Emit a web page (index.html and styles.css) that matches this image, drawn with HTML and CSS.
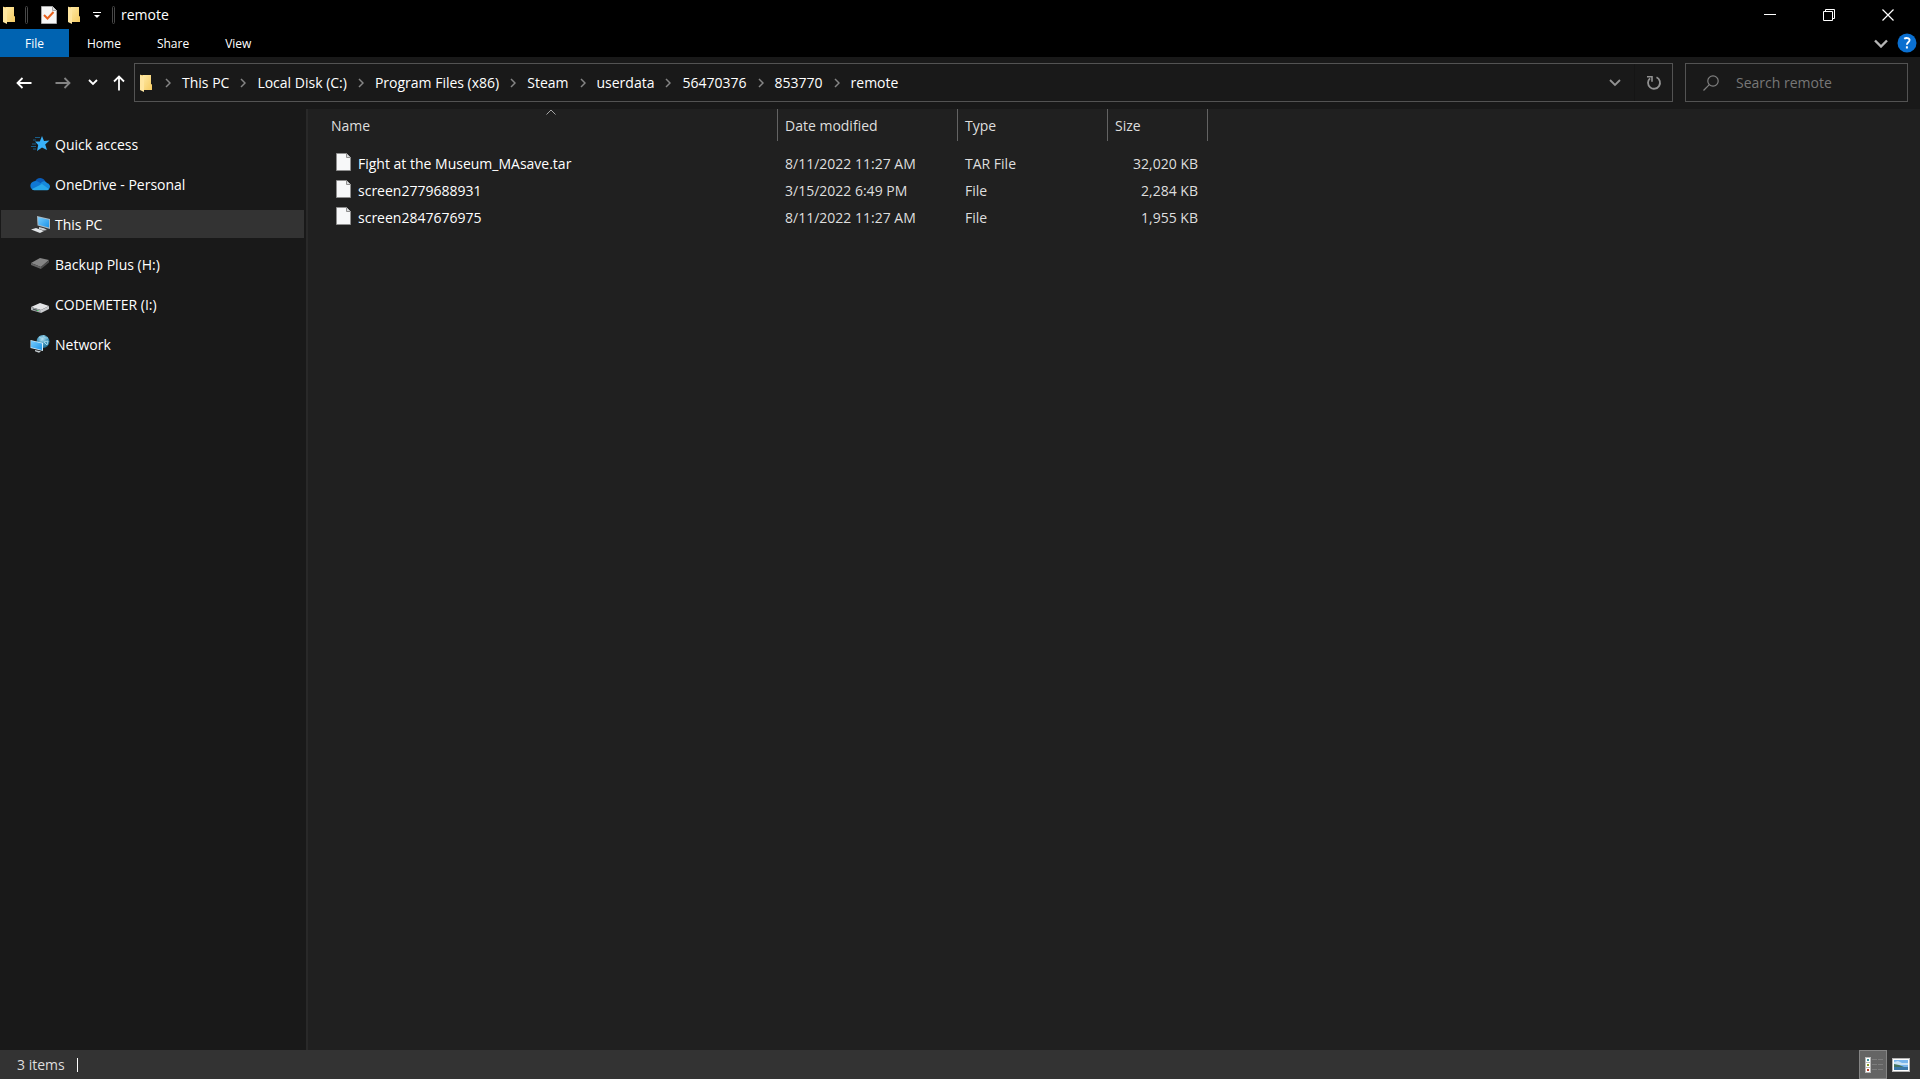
FILE: index.html
```html
<!DOCTYPE html>
<html lang="en">
<head>
  <meta charset="UTF-8">
  <meta name="viewport" content="width=device-width, initial-scale=1.0">
  <title>remote</title>
  <link rel="stylesheet" href="styles.css">
</head>
<body>
<svg class="defs" width="0" height="0" aria-hidden="true">
  <defs>
    <linearGradient id="folder-fill" x1="0" y1="0" x2="1" y2="1">
      <stop offset="0" stop-color="#ffe9a3"/>
      <stop offset="1" stop-color="#f5cb62"/>
    </linearGradient>
    <linearGradient id="screen-fill" x1="0" y1="0" x2="1" y2="1">
      <stop offset="0" stop-color="#79cdfd"/>
      <stop offset="1" stop-color="#1b93e8"/>
    </linearGradient>
    <radialGradient id="globe-fill" cx="0.45" cy="0.3" r="0.7">
      <stop offset="0" stop-color="#b9e2f2"/>
      <stop offset="0.5" stop-color="#4d9fc4"/>
      <stop offset="1" stop-color="#1f6d93"/>
    </radialGradient>
    <symbol id="folder" viewBox="0 0 14 18">
      <path d="M2 1h10v9l1 1v5H5z" fill="#efc661"/>
      <path d="M4 1h8v9l1 1v5H4z" fill="url(#folder-fill)"/>
      <path d="M1 0.5L5 3v15L1 16z" fill="#ffe6a0"/>
    </symbol>
    <symbol id="chevron" viewBox="0 0 6 10">
      <path d="M1 1l4 4-4 4" fill="none" stroke="#858585" stroke-width="1.5"/>
    </symbol>
    <symbol id="page" viewBox="0 0 15 18">
      <path d="M0.5 0.5h10l4 4v13h-14z" fill="#f7f8f9" stroke="#8f8f8f"/>
      <path d="M10.5 0.5v4h4" fill="#d8dadc" stroke="#8f8f8f"/>
    </symbol>
  </defs>
</svg>
<div class="window">
  <header class="title-bar">
    <svg class="folder-icon" width="14" height="18"><use href="#folder"/></svg>
    <span class="divider"></span>
    <div class="quick-tools">
      <button aria-label="Properties">
        <svg width="16" height="18" viewBox="0 0 16 18"><path d="M0.5 0.5h11l4 4v13h-15z" fill="#f6f6f6" stroke="#a8a8a8"/><path d="M11.5 0.5v4h4" fill="#ddd" stroke="#a8a8a8"/><path d="M3 9l3.500 3.500L12.500 6" fill="none" stroke="#e8601c" stroke-width="2"/></svg>
      </button>
      <button aria-label="New folder"><svg width="14" height="18"><use href="#folder"/></svg></button>
      <button aria-label="Customize toolbar">
        <svg width="10" height="8" viewBox="0 0 10 8"><path d="M2 1.500h8" stroke="#fff"/><path d="M3 4h6L6 7z" fill="#fff"/></svg>
      </button>
    </div>
    <span class="divider"></span>
    <h1>remote</h1>
    <div class="window-buttons">
      <button aria-label="Minimize"><svg width="12" height="12" viewBox="0 0 12 12"><path d="M0 5.500h12" stroke="#fff"/></svg></button>
      <button aria-label="Restore"><svg width="12" height="12" viewBox="0 0 12 12"><path d="M0.500 2.500h9v9h-9zM2.500 2.500v-2h9v9h-2" fill="none" stroke="#fff"/></svg></button>
      <button aria-label="Close"><svg width="12" height="12" viewBox="0 0 12 12"><path d="M0.500 0.500l11 11M11.500 0.500l-11 11" stroke="#fff" stroke-width="1.200"/></svg></button>
    </div>
  </header>

  <nav class="ribbon">
    <button class="tab file-tab">File</button>
    <button class="tab">Home</button>
    <button class="tab">Share</button>
    <button class="tab">View</button>
    <div class="ribbon-right">
      <button aria-label="Expand the ribbon"><svg width="14" height="9" viewBox="0 0 14 9"><path d="M1 1.500l6 6 6-6" fill="none" stroke="#b5b5b5" stroke-width="2.400"/></svg></button>
      <button class="help" aria-label="Help"><svg width="20" height="20" viewBox="0 0 20 20"><circle cx="10" cy="10" r="9.500" fill="#0a6fd0"/><path d="M7.200 5.800c1.600-1.200 5.400-1.200 5.400 1.300 0 2.200-2.700 2.200-2.700 4.700" fill="none" stroke="#fff" stroke-width="1.800"/><path d="M8.900 13.300h2v2.200h-2z" fill="#fff"/></svg></button>
    </div>
  </nav>

  <div class="address-row">
    <div class="history">
      <button aria-label="Back"><svg width="16" height="12" viewBox="0 0 16 12"><path d="M15.500 6H1.500M6.500 1l-5 5 5 5" fill="none" stroke="#fff" stroke-width="1.800"/></svg></button>
      <button aria-label="Forward"><svg width="16" height="12" viewBox="0 0 16 12"><path d="M0.500 6h14M9.500 1l5 5-5 5" fill="none" stroke="#848484" stroke-width="1.800"/></svg></button>
      <button class="narrow" aria-label="Recent locations"><svg width="10" height="7" viewBox="0 0 10 7"><path d="M1 1l4 4 4-4" fill="none" stroke="#fff" stroke-width="1.800"/></svg></button>
      <button class="up" aria-label="Up"><svg width="12" height="16" viewBox="0 0 12 16"><path d="M6 15.500V1.500M1 6.500l5-5 5 5" fill="none" stroke="#fff" stroke-width="1.800"/></svg></button>
    </div>
    <div class="address-box">
      <svg class="folder-icon" width="14" height="18"><use href="#folder"/></svg>
      <ol class="crumbs">
        <li><svg width="6" height="10"><use href="#chevron"/></svg><a href="#">This PC</a></li>
        <li><svg width="6" height="10"><use href="#chevron"/></svg><a href="#">Local Disk (C:)</a></li>
        <li><svg width="6" height="10"><use href="#chevron"/></svg><a href="#">Program Files (x86)</a></li>
        <li><svg width="6" height="10"><use href="#chevron"/></svg><a href="#">Steam</a></li>
        <li><svg width="6" height="10"><use href="#chevron"/></svg><a href="#">userdata</a></li>
        <li><svg width="6" height="10"><use href="#chevron"/></svg><a href="#">56470376</a></li>
        <li><svg width="6" height="10"><use href="#chevron"/></svg><a href="#">853770</a></li>
        <li><svg width="6" height="10"><use href="#chevron"/></svg><a href="#">remote</a></li>
      </ol>
      <button aria-label="Previous locations"><svg width="12" height="8" viewBox="0 0 12 8"><path d="M1 1l5 5 5-5" fill="none" stroke="#929292" stroke-width="1.800"/></svg></button>
      <button class="refresh" aria-label="Refresh"><svg width="16" height="16" viewBox="0 0 16 16"><path d="M10.500 2.300A6 6 0 1 1 4 3.300" fill="none" stroke="#929292" stroke-width="1.800"/><path d="M1 1.800h5v5" fill="none" stroke="#929292" stroke-width="1.600"/></svg></button>
    </div>
    <label class="search-box">
      <svg width="16" height="16" viewBox="0 0 16 16"><circle cx="10" cy="6" r="5.200" fill="none" stroke="#808080" stroke-width="1.200"/><path d="M6.300 9.700L0.500 15.500" stroke="#808080" stroke-width="1.200"/></svg>
      <input type="search" placeholder="Search remote" aria-label="Search remote">
    </label>
  </div>

  <main class="panes">
    <nav class="sidebar">
      <a href="#">
        <svg width="20" height="20" viewBox="0 0 20 20"><path d="M12 2l2 5 5.500-0.500-4.300 4L17 16l-5-2.500L7 17l1.200-6L5 7.500h4.800z" fill="#38b0f8"/><path d="M5 3.500h5M3 6h3M2 10h4M1 12.500h5M3 15h3" stroke="#1b6fa5" stroke-width="0.800"/></svg>
        Quick access
      </a>
      <a href="#">
        <svg width="20" height="20" viewBox="0 0 20 20"><path d="M5 8c1-4 7-6 10-1l1 4-9 2z" fill="#0a5cb8"/><path d="M4 16c-5-1-5-8 1-9 3 0 4 1 8 4l-6 5z" fill="#0f78d4"/><path d="M10 10c2-3 5-4 7-1 4 1 4 6 0 7l-5-2z" fill="#1689dc"/><path d="M2 15l10-5 7 5c-0.500 1-1 1.200-3 1.200H4c-1 0-1.500-0.400-2-1.200z" fill="#28a8ea"/></svg>
        OneDrive - Personal
      </a>
      <a href="#" class="selected">
        <svg width="20" height="20" viewBox="0 0 20 20"><path d="M7 2l13 3v10L7.500 11.500z" fill="#a9bac5"/><path d="M8 3.200l11 2.600v7.800L8.500 10.800z" fill="url(#screen-fill)"/><path d="M9 13l5 1.200 3 1.800-3 0.500-5-1.500z" fill="#cbd0d4"/><path d="M1 15.500l5-1.500 8 3-4 2z" fill="#e1e4e7"/></svg>
        This PC
      </a>
      <a href="#">
        <svg width="20" height="20" viewBox="0 0 20 20"><path d="M1 9l9-5 9 2-8 7z" fill="#858585"/><path d="M1 9l10 4v2L1 11z" fill="#636363"/><path d="M19 6v2.500L11 15v-2z" fill="#4f4f4f"/></svg>
        Backup Plus (H:)
      </a>
      <a href="#">
        <svg width="20" height="20" viewBox="0 0 20 20"><g transform="translate(0 2)"><path d="M1 11l9-4 9 3-8 4z" fill="#e4e5e7"/><path d="M1 11l10 3v3L1 14z" fill="#aeb1b5"/><path d="M19 10v3l-8 4v-3z" fill="#c9cbce"/><path d="M3 12.500l5 1.500v1.200l-5-1.500z" fill="#4b5658"/><path d="M7 14h1.500v1H7z" fill="#42c45c"/></g></svg>
        CODEMETER (I:)
      </a>
      <a href="#">
        <svg width="20" height="20" viewBox="0 0 20 20"><circle cx="13" cy="7.500" r="6.500" fill="url(#globe-fill)"/><path d="M9 3c2 0 3 2 2 4M14 1c-1 3 2 3 4 3M14 8l4-1-1 4z" fill="none" stroke="#a4d8ec"/><path d="M0.500 6l12.500 3v8L0.500 14z" fill="#d6edf9"/><path d="M1 6.800l11 2.700v6.500L1 13.300z" fill="url(#screen-fill)"/><path d="M5 16l3 0.800 3 0.500-2 1.500-4-1.500z" fill="#c5ccd0"/></svg>
        Network
      </a>
    </nav>
    <section class="file-list">
      <table>
        <colgroup><col class="col-name"><col class="col-date"><col class="col-type"><col class="col-size"></colgroup>
        <thead>
          <tr>
            <th><svg class="sort-mark" width="10" height="6" viewBox="0 0 10 6"><path d="M0.500 5.500L5 1l4.500 4.500" fill="none" stroke="#a5a5a5"/></svg><button>Name</button></th>
            <th><button>Date modified</button></th>
            <th><button>Type</button></th>
            <th><button>Size</button></th>
          </tr>
        </thead>
        <tbody>
          <tr>
            <td><div class="file-name"><svg width="15" height="18"><use href="#page"/></svg>Fight at the Museum_MAsave.tar</div></td>
            <td>8/11/2022 11:27 AM</td>
            <td>TAR File</td>
            <td>32,020 KB</td>
          </tr>
          <tr>
            <td><div class="file-name"><svg width="15" height="18"><use href="#page"/></svg>screen2779688931</div></td>
            <td>3/15/2022 6:49 PM</td>
            <td>File</td>
            <td>2,284 KB</td>
          </tr>
          <tr>
            <td><div class="file-name"><svg width="15" height="18"><use href="#page"/></svg>screen2847676975</div></td>
            <td>8/11/2022 11:27 AM</td>
            <td>File</td>
            <td>1,955 KB</td>
          </tr>
        </tbody>
      </table>
    </section>
  </main>

  <footer class="status-bar">
    <span class="count">3 items</span>
    <div class="view-buttons">
      <button class="active" aria-label="Details view">
        <svg width="20" height="16" viewBox="0 0 20 16"><path d="M0 0h6v16H0z" fill="#b8b8b8"/><path d="M1 1h4v4H1zM1 6h4v4H1zM1 11h4v4H1z" fill="#fff"/><path d="M2 2h2v2H2z" fill="#3b8f9b"/><path d="M2 7h2v2H2z" fill="#8b9a2a"/><path d="M2 12h2v2H2z" fill="#b73c24"/><path d="M7 2.500h5M13 2.500h5M7 7.500h5M13 7.500h5M7 12.500h5M13 12.500h5" stroke="#7d7d7d"/></svg>
      </button>
      <button aria-label="Large icons view">
        <svg width="18" height="14" viewBox="0 0 18 14"><path d="M0 0h18v14H0z" fill="#b5b5b5"/><path d="M1 1h16v12H1z" fill="#fff"/><path d="M2 2h14v10H2z" fill="#78b5ed"/><path d="M2 4l4-1 4 2 6 0v2H2z" fill="#c9e2f5"/><path d="M2 6l5 1 5 2 4 0v1H2z" fill="#46755f"/><path d="M2 9h14v3H2z" fill="#3c78a8"/></svg>
      </button>
    </div>
  </footer>
</div>
</body>
</html>
```
FILE: styles.css
```css
* {
  box-sizing: border-box;
}
body {
  margin: 0;
  font-family: "Open Sans", "Noto Sans", sans-serif;
  font-size: 14px;
  line-height: 20px;
  color: #fff;
  background: #202020;
}
button {
  display: flex;
  align-items: center;
  justify-content: center;
  padding: 0;
  border: none;
  background: none;
  color: inherit;
  font: inherit;
}
a {
  color: inherit;
  text-decoration: none;
}
svg {
  display: block;
  flex-shrink: 0;
}
.defs {
  position: absolute;
}
.window {
  display: flex;
  flex-direction: column;
  min-height: 100vh;
}

/* title bar */
.title-bar {
  display: flex;
  align-items: center;
  height: 29px;
  padding-left: 2px;
  background: #000;
}
.divider {
  width: 3px;
  height: 18px;
  margin-left: 9px;
  border: 1px solid #484848;
  border-radius: 2px;
}
.quick-tools {
  display: flex;
  align-items: center;
  gap: 10px;
  margin: 0 2px 0 13px;
}
h1 {
  margin: 0 0 0 6px;
  font-size: 14px;
  font-weight: 400;
}
.window-buttons {
  display: flex;
  margin-left: auto;
  padding-right: 3px;
}
.window-buttons button {
  width: 59px;
  height: 28px;
}

/* ribbon */
.ribbon {
  display: flex;
  height: 28px;
  background: #000;
}
.tab {
  padding: 2px 18px 0;
  font-size: 12px;
}
.file-tab {
  width: 69px;
  background: #0063b1;
}
.ribbon-right {
  display: flex;
  align-items: center;
  gap: 9px;
  margin-left: auto;
  padding-right: 3px;
}

/* address row */
.address-row {
  display: flex;
  align-items: center;
  height: 52px;
  padding: 0 12px 1px 0;
  background: #191919;
}
.history {
  display: flex;
  padding-left: 4px;
}
.history button {
  width: 39px;
  height: 39px;
}
.history .narrow {
  width: 21px;
}
.history .up {
  width: 31px;
}
.address-box {
  display: flex;
  flex: 1;
  align-items: center;
  height: 39px;
  margin-right: 12px;
  padding-left: 4px;
  border: 1px solid #535353;
}
.crumbs {
  display: flex;
  flex: 1;
  margin: 0;
  padding: 0 0 0 1px;
  list-style: none;
}
.crumbs li {
  display: flex;
  align-items: center;
}
.crumbs svg {
  margin: 0 11px;
}
.address-box button {
  width: 38px;
  height: 37px;
}
.address-box .refresh {
  border-left: 1px solid #151515;
}
.search-box {
  display: flex;
  align-items: center;
  gap: 17px;
  width: 223px;
  height: 39px;
  padding-left: 17px;
  border: 1px solid #535353;
}
.search-box input {
  width: 100%;
  min-width: 0;
  padding: 0;
  border: none;
  outline: none;
  background: none;
  color: #fff;
  font: inherit;
}
.search-box input::placeholder {
  color: #777;
}

/* panes */
.panes {
  display: flex;
  flex: 1;
}
.sidebar {
  display: flex;
  flex-direction: column;
  gap: 12px;
  width: 308px;
  padding: 21px 2px 0 1px;
  border-right: 2px solid #292929;
  background: #191919;
}
.sidebar a {
  display: flex;
  align-items: center;
  gap: 5px;
  height: 28px;
  padding: 2px 0 0 29px;
}
.sidebar svg {
  margin-bottom: 2px;
}
.sidebar .selected {
  background: #333;
}
.file-list {
  flex: 1;
  padding-left: 16px;
}
table {
  width: 884px;
  table-layout: fixed;
  border-collapse: separate;
  border-spacing: 0;
  color: #dedede;
}
.col-name {
  width: 454px;
}
.col-date {
  width: 180px;
}
.col-type {
  width: 150px;
}
.col-size {
  width: 100px;
}
th {
  position: relative;
  height: 32px;
  padding: 2px 7px 0;
  border-right: 1px solid #636363;
  font-weight: 400;
}
.sort-mark {
  position: absolute;
  top: 0;
  left: 50%;
  margin-left: -5px;
}
tbody::before {
  content: "";
  display: table-row;
  height: 8px;
}
td {
  height: 27px;
  padding: 2px 7px 0;
  white-space: nowrap;
}
td:last-child {
  padding-right: 10px;
  text-align: right;
}
.file-name {
  display: flex;
  align-items: center;
  gap: 7px;
  padding-left: 5px;
  color: #fff;
}
.file-name svg {
  margin-bottom: 4px;
}

/* status bar */
.status-bar {
  display: flex;
  align-items: center;
  justify-content: space-between;
  height: 29px;
  padding-left: 17px;
  background: #333;
  color: #dedede;
}
.count {
  padding-right: 12px;
  border-right: 1px solid #fff;
  line-height: 14px;
}
.view-buttons {
  display: flex;
  padding-right: 5px;
}
.view-buttons button {
  width: 28px;
  height: 29px;
}
.view-buttons .active {
  padding-left: 4px;
  border: 1px solid #858585;
  background: #646464;
}
```
